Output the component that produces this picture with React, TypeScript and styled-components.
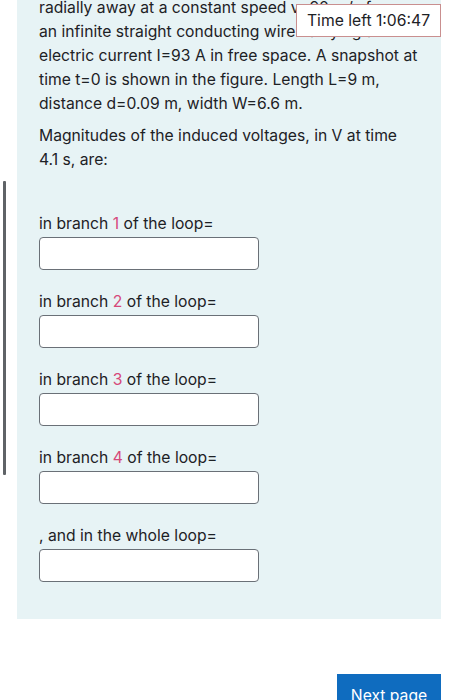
import React from "react";
import styled, { createGlobalStyle } from "styled-components";

const Global = createGlobalStyle`
  html, body { margin: 0; padding: 0; background: #fff; }
  body { font-family: Inter, "Liberation Sans", Arial, sans-serif; color: #1d2125; overflow: hidden; }
`;

const Page = styled.div`
  display: flex;
  width: 458px;
  height: 700px;
  overflow: hidden;
`;

const Rail = styled.div`
  width: 17px;
  flex: none;
  padding-top: 181px;
  box-sizing: border-box;
`;

const RailBar = styled.div`
  margin-left: 3px;
  width: 3px;
  height: 294px;
  background: #5f6367;
  border-radius: 1px;
`;

const Main = styled.div`
  width: 424px;
  display: flex;
  flex-direction: column;
  position: relative;
`;

const Panel = styled.div`
  background: #e7f3f5;
  margin-top: -4px;
  padding: 0 22px 37px 22px;
  font-size: 15.7px;
  line-height: 24px;
`;

const Para = styled.p<{ $gap?: number }>`
  margin: 0 0 ${(p) => p.$gap ?? 0}px 0;
  white-space: nowrap;
`;

const Field = styled.div<{ $top: number }>`
  display: flex;
  flex-direction: column;
  gap: 1px;
  margin-top: ${(p) => p.$top}px;
`;

const Label = styled.div`
  line-height: 24px;
`;

const Num = styled.span`
  color: #d6487a;
`;

const Input = styled.input`
  width: 220px;
  height: 33px;
  box-sizing: border-box;
  border: 1px solid #6a7077;
  border-radius: 4px;
  background: #fff;
  margin: 0;
`;

const Timer = styled.div`
  position: absolute;
  top: 4px;
  left: 279px;
  width: 145px;
  height: 33px;
  box-sizing: border-box;
  background: #fff;
  border: 1px solid #c98f8f;
  font-size: 15.7px;
  display: flex;
  align-items: center;
  justify-content: center;
  color: #1d2125;
`;

const Footer = styled.div`
  display: flex;
  justify-content: flex-end;
  margin-top: 55px;
`;

const NextButton = styled.button`
  background: #0f6cbf;
  color: #fff;
  border: none;
  font-family: inherit;
  font-size: 15.7px;
  width: 104px;
  height: 38px;
  padding: 6px 0 0 0;
  line-height: 24px;
  text-align: center;
`;

export default function App() {
  return (
    <>
      <Global />
      <Page>
        <Rail>
          <RailBar />
        </Rail>
        <Main>
          <Panel>
            <Para $gap={8}>
              radially away at a constant speed v=90 m/s from
              <br />
              an infinite straight conducting wire carrying a
              <br />
              electric current I=93 A in free space. A snapshot at
              <br />
              time t=0 is shown in the figure. Length L=9 m,
              <br />
              distance d=0.09 m, width W=6.6 m.
            </Para>
            <Para>
              Magnitudes of the induced voltages, in V at time
              <br />
              4.1 s, are:
            </Para>
            <Field $top={40}>
              <Label>in branch <Num>1</Num> of the loop=</Label>
              <Input />
            </Field>
            <Field $top={20}>
              <Label>in branch <Num>2</Num> of the loop=</Label>
              <Input />
            </Field>
            <Field $top={20}>
              <Label>in branch <Num>3</Num> of the loop=</Label>
              <Input />
            </Field>
            <Field $top={20}>
              <Label>in branch <Num>4</Num> of the loop=</Label>
              <Input />
            </Field>
            <Field $top={20}>
              <Label>, and in the whole loop=</Label>
              <Input />
            </Field>
          </Panel>
          <Footer>
            <NextButton>Next page</NextButton>
          </Footer>
          <Timer>Time left 1:06:47</Timer>
        </Main>
      </Page>
    </>
  );
}
